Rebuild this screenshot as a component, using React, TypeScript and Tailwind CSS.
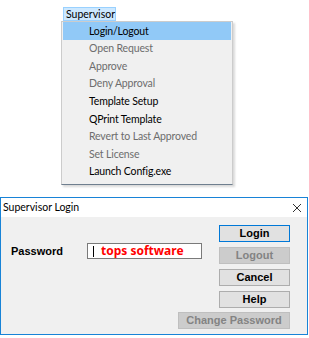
import React from 'react';

type MenuItem = { label: string; enabled: boolean; active?: boolean };

const menuItems: MenuItem[] = [
  { label: 'Login/Logout', enabled: true, active: true },
  { label: 'Open Request', enabled: false },
  { label: 'Approve', enabled: false },
  { label: 'Deny Approval', enabled: false },
  { label: 'Template Setup', enabled: true },
  { label: 'QPrint Template', enabled: true },
  { label: 'Revert to Last Approved', enabled: false },
  { label: 'Set License', enabled: false },
  { label: 'Launch Config.exe', enabled: true },
];

const uiFont = "font-['Lato','Noto_Sans',sans-serif]";
const boldFont = "font-['Noto_Sans','Open_Sans',sans-serif]";
const dlgFont = "font-['Liberation_Sans',Arial,sans-serif]";

const DlgButton: React.FC<{ label: string; disabled?: boolean; focused?: boolean; wide?: boolean }> = ({
  label,
  disabled,
  focused,
  wide,
}) => (
  <div
    className={`${wide ? 'w-[112px]' : 'w-[71px]'} h-[17px] flex items-center justify-center text-[11px] font-bold leading-none border ${dlgFont} ${
      disabled
        ? 'bg-[#cccccc] border-[#bfbfbf] text-[#838383]'
        : focused
        ? 'bg-[#e1e1e1] border-[#0078d7] text-black'
        : 'bg-[#e1e1e1] border-[#adadad] text-black'
    }`}
  >
    {label}
  </div>
);

export default function App() {
  return (
    <div className="w-[309px] h-[338px] bg-white overflow-hidden">
      {/* Menu */}
      <div className={`pt-[7px] pl-[61px] ${uiFont}`}>
        <div className="ml-[2px] w-[53px] h-[14px] bg-[#cce8ff] border border-[#99d1ff] flex items-center pl-[2px] text-[10.5px] leading-none text-black">
          Supervisor
        </div>
        <div className="w-[172px] h-[164px] bg-[#f0f0f0] border border-[#cccccc] border-b-[#6f7f8f] px-[1px] shadow-[2px_2px_2px_rgba(0,0,0,0.15)]">
          {menuItems.map((item) => (
            <div
              key={item.label}
              className={`h-[17.6px] flex items-center pl-[26px] text-[10.5px] tracking-[-0.15px] leading-none ${
                item.active ? 'bg-[#91c9f7]' : ''
              } ${item.enabled ? 'text-black' : 'text-[#6d6d6d]'}`}
            >
              {item.label}
            </div>
          ))}
        </div>
      </div>

      {/* Dialog */}
      <div className="mt-[12px] w-[308px] h-[138px] border border-[#1883d7] bg-[#f0f0f0] flex flex-col">
        <div className={`h-[19px] shrink-0 bg-white flex items-center justify-between pl-[2px] pr-[6px] text-[10.5px] text-black ${uiFont}`}>
          <span>Supervisor Login</span>
          <svg width="8" height="8" viewBox="0 0 8 8">
            <path d="M0 0 L8 8 M8 0 L0 8" stroke="#333" strokeWidth="1" />
          </svg>
        </div>
        <div className="flex flex-col pt-[8px] pr-[17px]">
          <div className="flex">
            <div className="w-[218px] shrink-0 flex items-start pl-[10px] pt-[18px]">
              <span className={`w-[76px] text-[11px] font-bold leading-[16px] text-black ${dlgFont}`}>Password</span>
              <div className="w-[115px] h-[16px] bg-white border border-[#7a7a7a] flex items-center pl-[5px]">
                <span className="w-[1px] h-[11px] bg-black" />
                <span className={`ml-[7px] text-[12px] font-bold leading-none text-[#ff0000] ${boldFont}`}>tops software</span>
              </div>
            </div>
            <div className="w-[71px] flex flex-col gap-[5px]">
              <DlgButton label="Login" focused />
              <DlgButton label="Logout" disabled />
              <DlgButton label="Cancel" />
              <DlgButton label="Help" />
            </div>
          </div>
          <div className="flex justify-end mt-[4px]">
            <DlgButton label="Change Password" disabled wide />
          </div>
        </div>
      </div>
    </div>
  );
}
